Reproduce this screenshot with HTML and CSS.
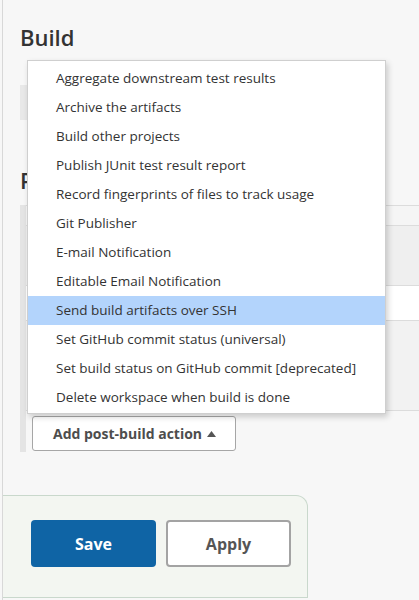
FILE: index.html
```html
<!DOCTYPE html>
<html>
<head>
<meta charset="utf-8">
<link rel="stylesheet" href="styles.css">
</head>
<body>
<div class="app">
  <div class="content">
    <h2 class="section-title">Build</h2>
    <div class="build-step"></div>
    <h2 class="section-title second">Post-build Actions</h2>
    <div class="pb-group">
      <div class="pb-panel">
        <div class="pb-head"></div>
        <div class="pb-body"></div>
        <div class="pb-input"></div>
        <div class="pb-lower"></div>
      </div>
      <button class="add-btn">Add post-build action <svg class="caret" width="9" height="6" viewBox="0 0 9 6"><polygon points="0,6 4.5,0 9,6" fill="#555"/></svg></button>
    </div>
  </div>
  <div class="menu">
    <div class="item">Aggregate downstream test results</div>
    <div class="item">Archive the artifacts</div>
    <div class="item">Build other projects</div>
    <div class="item">Publish JUnit test result report</div>
    <div class="item">Record fingerprints of files to track usage</div>
    <div class="item">Git Publisher</div>
    <div class="item">E-mail Notification</div>
    <div class="item">Editable Email Notification</div>
    <div class="item active">Send build artifacts over SSH</div>
    <div class="item">Set GitHub commit status (universal)</div>
    <div class="item">Set build status on GitHub commit [deprecated]</div>
    <div class="item">Delete workspace when build is done</div>
  </div>
  <div class="bottom-bar">
    <button class="btn save">Save</button>
    <button class="btn apply">Apply</button>
  </div>
</div>
</body>
</html>
```
FILE: styles.css
```css
html, body {
  margin: 0;
  padding: 0;
  background: #f7f7f7;
  font-family: "Open Sans", "Noto Sans", sans-serif;
  color: #333;
}
.app {
  position: relative;
  margin-left: 2px;
  border-left: 1px solid #d8d8d8;
  height: 600px;
  overflow: hidden;
}
.content {
  padding-left: 17px;
}
.section-title {
  margin: 0;
  padding-top: 22px;
  font-size: 22px;
  line-height: 30px;
  font-weight: 600;
  color: #333;
}
.section-title.second {
  padding-top: 45px;
}
.build-step {
  margin-top: 33px;
  width: 120px;
  height: 35px;
  background: #e8e8e8;
}
.pb-group {
  margin-top: 10px;
  border-left: 6px solid #e4e4e4;
  padding-bottom: 1px;
}
.pb-panel {
  border-top: 1px solid #dcdcdc;
  border-bottom: 1px solid #dcdcdc;
}
.pb-head {
  height: 19px;
  background: #f5f5f5;
  border-bottom: 1px solid #dcdcdc;
}
.pb-body {
  height: 59px;
  background: #efefef;
  border-bottom: 1px solid #dcdcdc;
}
.pb-input {
  height: 34px;
  background: #ffffff;
  border-bottom: 1px solid #dcdcdc;
}
.pb-lower {
  height: 89px;
  background: #f2f2f2;
}
.add-btn {
  display: flex;
  align-items: center;
  gap: 5px;
  margin-top: 5px;
  margin-left: 6px;
  height: 35px;
  width: 204px;
  padding: 0 0 0 20px;
  background: #fff;
  border: 1px solid #a6a6a6;
  border-radius: 3px;
  font-family: inherit;
  font-size: 14px;
  font-weight: 700;
  color: #4d4d4d;
}
.caret {
  display: block;
}
.menu {
  position: absolute;
  left: 24px;
  top: 60px;
  width: 357px;
  padding: 3px 0 1px 0;
  background: #fff;
  border: 1px solid #cfcfcf;
  box-shadow: 2px 3px 6px rgba(0, 0, 0, 0.18);
}
.item {
  height: 29px;
  line-height: 29px;
  padding-left: 28px;
  font-size: 13.5px;
  color: #333;
  white-space: nowrap;
}
.item.active {
  background: #b3d4fc;
}
.bottom-bar {
  position: absolute;
  left: 0;
  bottom: 2px;
  display: flex;
  gap: 10px;
  height: 103px;
  padding: 24px 0 0 28px;
  box-sizing: border-box;
  width: 305px;
  background: #f3f6f1;
  border: 1px solid #c9d8cc;
  border-left: none;
  border-top-right-radius: 12px;
}
.btn {
  width: 125px;
  height: 47px;
  border-radius: 4px;
  font-family: inherit;
  font-size: 16px;
  font-weight: 700;
}
.save {
  background: #0f64a5;
  color: #fff;
  border: none;
}
.apply {
  background: #fff;
  color: #555;
  border: 2px solid #a3a3a3;
}
```
